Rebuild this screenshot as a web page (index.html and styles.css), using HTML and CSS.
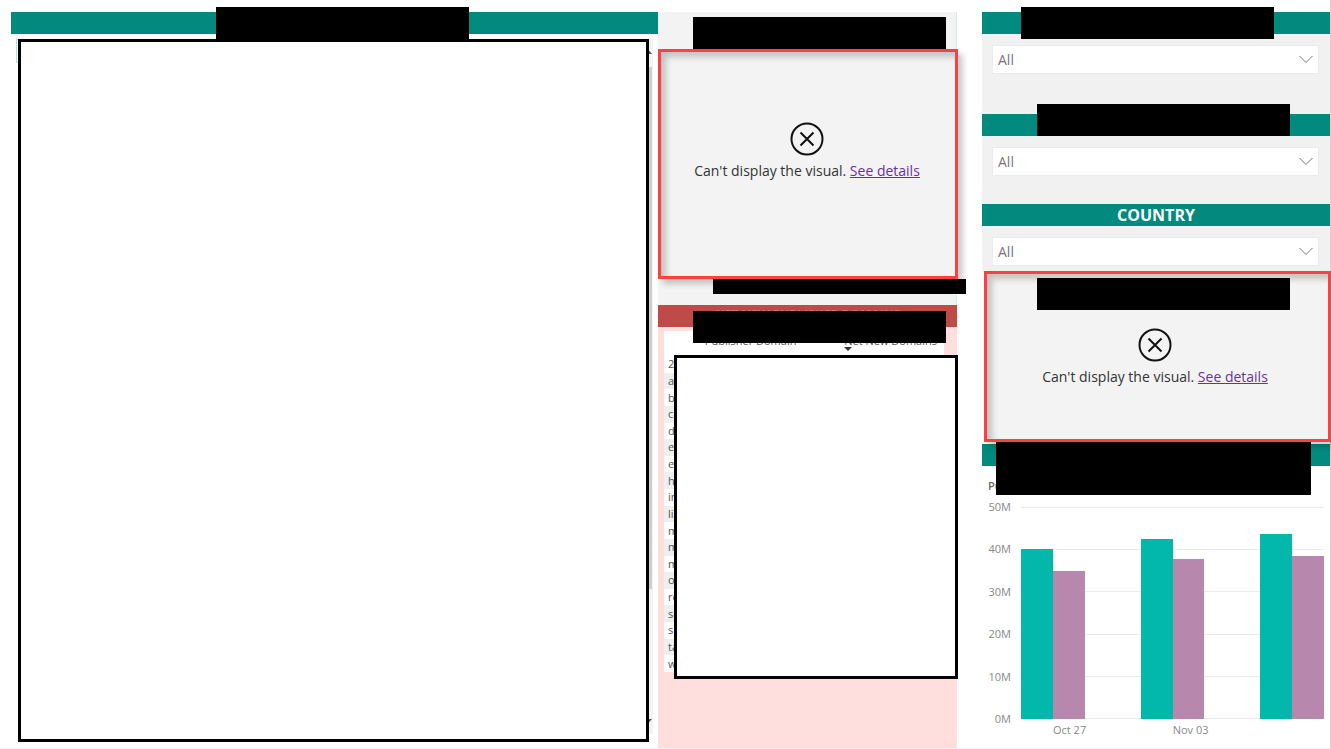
FILE: index.html
```html
<!DOCTYPE html>
<html lang="en">

<head>
    <meta charset="UTF-8">
    <meta name="viewport" content="width=device-width, initial-scale=1.0">
    <title>Publisher Report</title>
    <link rel="stylesheet" href="styles.css">
</head>

<body>
    <main class="report">
        <!-- Main table -->
        <section class="column">
            <div class="bar">
                <div class="redact redact-main"></div>
            </div>
            <div class="main-body">
                <div class="cell-focus"></div>
                <div class="scrollbar">
                    <svg width="7" height="4" viewBox="0 0 7 4"><path d="M0 4 3.500 0 7 4z" /></svg>
                    <div class="scroll-thumb"></div>
                    <svg width="7" height="4" viewBox="0 0 7 4"><path d="M0 0 3.500 4 7 0z" /></svg>
                </div>
                <div class="cover cover-main"></div>
            </div>
        </section>

        <!-- Domains -->
        <section class="column">
            <div class="card-area">
                <div class="redact redact-card"></div>
                <div class="callout">
                    <svg class="error-icon" viewBox="0 0 34 34">
                        <circle cx="17" cy="17" r="15.500" />
                        <path d="M10.500 10.500 23.500 23.500M23.500 10.500 10.500 23.500" />
                    </svg>
                    <p>Can't display the visual. <a href="#">See details</a></p>
                </div>
                <div class="redact redact-strip"></div>
            </div>
            <div class="bar bar-red">
                <h2>NET NEW PUBLISHER DOMAINS</h2>
                <div class="redact redact-domains"></div>
            </div>
            <div class="domains-body">
                <table class="domains">
                    <thead>
                        <tr>
                            <th>Publisher Domain</th>
                            <th class="sorted">Net New Domains</th>
                        </tr>
                    </thead>
                    <tbody>
                        <tr><td>2</td><td></td></tr>
                        <tr><td>a</td><td></td></tr>
                        <tr><td>b</td><td></td></tr>
                        <tr><td>c</td><td></td></tr>
                        <tr><td>d</td><td></td></tr>
                        <tr><td>e</td><td></td></tr>
                        <tr><td>e</td><td></td></tr>
                        <tr><td>h</td><td></td></tr>
                        <tr><td>in</td><td></td></tr>
                        <tr><td>li</td><td></td></tr>
                        <tr><td>m</td><td></td></tr>
                        <tr><td>m</td><td></td></tr>
                        <tr><td>m</td><td></td></tr>
                        <tr><td>o</td><td></td></tr>
                        <tr><td>re</td><td></td></tr>
                        <tr><td>se</td><td></td></tr>
                        <tr><td>s</td><td></td></tr>
                        <tr><td>ta</td><td></td></tr>
                        <tr><td>w</td><td></td></tr>
                    </tbody>
                </table>
                <div class="cover cover-domains"></div>
            </div>
        </section>

        <!-- Filters and chart -->
        <section class="column column-filters">
            <div class="bar">
                <div class="redact redact-first"></div>
            </div>
            <div class="slicer">
                <select aria-label="First filter">
                    <option>All</option>
                </select>
                <svg class="chevron" viewBox="0 0 14 9"><path d="M0.500 1 7 7.500 13.500 1" /></svg>
            </div>
            <div class="bar">
                <div class="redact redact-second"></div>
            </div>
            <div class="slicer slicer-short">
                <select aria-label="Second filter">
                    <option>All</option>
                </select>
                <svg class="chevron" viewBox="0 0 14 9"><path d="M0.500 1 7 7.500 13.500 1" /></svg>
            </div>
            <div class="bar">
                <h2><label for="country">COUNTRY</label></h2>
            </div>
            <div class="slicer slicer-last">
                <select id="country">
                    <option>All</option>
                </select>
                <svg class="chevron" viewBox="0 0 14 9"><path d="M0.500 1 7 7.500 13.500 1" /></svg>
            </div>
            <div class="callout callout-small">
                <div class="redact redact-callout"></div>
                <svg class="error-icon" viewBox="0 0 34 34">
                    <circle cx="17" cy="17" r="15.500" />
                    <path d="M10.500 10.500 23.500 23.500M23.500 10.500 10.500 23.500" />
                </svg>
                <p>Can't display the visual. <a href="#">See details</a></p>
            </div>
            <div class="bar">
                <div class="redact redact-chart"></div>
            </div>
            <div class="chart">
                <h3>Pu</h3>
                <div class="chart-grid">
                    <div class="y-axis">
                        <span>50M</span>
                        <span>40M</span>
                        <span>30M</span>
                        <span>20M</span>
                        <span>10M</span>
                        <span>0M</span>
                    </div>
                    <div class="lines">
                        <i></i><i></i><i></i><i></i><i></i><i></i>
                    </div>
                    <div class="bars">
                        <div class="group">
                            <div class="teal" style="height: 80%"></div>
                            <div class="mauve" style="height: 69.600%"></div>
                        </div>
                        <div class="group">
                            <div class="teal" style="height: 84.800%"></div>
                            <div class="mauve" style="height: 75.400%"></div>
                        </div>
                        <div class="group">
                            <div class="teal" style="height: 87.200%"></div>
                            <div class="mauve" style="height: 76.800%"></div>
                        </div>
                    </div>
                    <div class="x-axis">
                        <span>Oct 27</span>
                        <span>Nov 03</span>
                        <span></span>
                    </div>
                </div>
            </div>
        </section>
    </main>
</body>

</html>
```
FILE: styles.css
```css
* {
    box-sizing: border-box;
}

body {
    margin: 0;
    background: #fff;
    color: #333;
    font-family: "Open Sans", "Noto Sans", sans-serif;
}

h2,
h3,
p {
    margin: 0;
}

.report {
    display: grid;
    grid-template-columns: 647fr 299fr 25px 348fr;
    min-height: 100vh;
    padding: 12px 0 0 11px;
    border-right: 1px solid #d4d4d4;
    border-bottom: 1px solid #f0f0f0;
}

.column {
    display: flex;
    flex-direction: column;
    min-width: 0;
}

.column-filters {
    grid-column: 4;
}

.bar {
    position: relative;
    flex: none;
    height: 22px;
    background: #028a7e;
    color: #fff;
    text-align: center;
}

.bar h2 {
    font-size: 16px;
    line-height: 22px;
}

.bar-red {
    background: #bf4b48;
}

.bar-red h2 {
    color: #cf7a77;
    font-size: 12px;
    line-height: 20px;
}

/* Black boxes and framed covers */
.redact {
    position: absolute;
    z-index: 3;
    width: 253px;
    height: 32px;
    background: #000;
}

.redact-main {
    top: -5px;
    left: 205px;
}

.redact-card {
    top: 5px;
    left: 35px;
}

.redact-strip {
    top: 267px;
    left: 55px;
    height: 15px;
}

.redact-domains {
    top: 6px;
    left: 35px;
}

.redact-first {
    top: -5px;
    left: 39px;
}

.redact-second {
    top: -10px;
    left: 55px;
}

.redact-callout {
    top: 4px;
    left: 50px;
}

.redact-chart {
    top: -2px;
    left: 14px;
    width: auto;
    right: 19px;
    height: 53px;
}

.cover {
    position: absolute;
    z-index: 2;
    background: #fff;
    border: 3px solid #000;
}

.cover-main {
    inset: 5px 9px 6px 7px;
}

.cover-domains {
    top: 28px;
    left: 16px;
    right: -1px;
    height: 324px;
}

/* Main table */
.main-body {
    position: relative;
    flex: 1;
    display: flex;
    justify-content: space-between;
    padding: 5px 5px 14px;
}

.cell-focus {
    width: 40px;
    height: 24px;
    border: 1px solid #a6e8e0;
}

.scrollbar {
    display: flex;
    flex-direction: column;
    width: 9px;
    padding: 11px 1px;
    background: #f3f3f3;
    fill: #555;
}

.scroll-thumb {
    height: 522px;
    margin: 13px 0 auto;
    background: #cdcdcd;
}

/* Error cards */
.card-area {
    position: relative;
    height: 293px;
    padding-top: 37px;
    background: #f3f3f3;
    border-right: 1px solid #d5ebe8;
}

.callout {
    position: relative;
    z-index: 2;
    display: flex;
    flex-direction: column;
    align-items: center;
    height: 230px;
    margin-right: -2px;
    padding: 70px 2px 0 0;
    background: #f3f3f3;
    border: 3px solid #ff4040;
    box-shadow: 5px 5px 6px rgba(0, 0, 0, 0.2), inset 5px 5px 6px rgba(0, 0, 0, 0.2);
    font-size: 14px;
    line-height: 22px;
    white-space: nowrap;
}

.callout a {
    color: #6b2fa0;
}

.callout-small {
    height: 171px;
    margin: 0 -1px 2px 2px;
    padding: 54px 5px 0 0;
}

.error-icon {
    width: 34px;
    height: 34px;
    margin-bottom: 4px;
    fill: none;
    stroke: #111;
    stroke-width: 2;
}

/* Domains table */
.domains-body {
    position: relative;
    flex: 1;
    padding: 4px 13px 4px 6px;
    background: #ffdede;
}

.domains {
    width: 100%;
    height: 341px;
    background: #fff;
    border-collapse: collapse;
    color: #555;
    font-size: 11px;
    line-height: 14px;
}

.domains th {
    position: relative;
    height: 25px;
    padding: 0 7px 6px;
    font-weight: normal;
    white-space: nowrap;
}

.domains .sorted {
    text-align: right;
}

.sorted::after {
    content: "";
    position: absolute;
    top: 16px;
    left: 7px;
    border: 4px solid transparent;
    border-top-color: #333;
    border-bottom: 0;
}

.domains th:first-child {
    width: 62%;
}

.domains td {
    padding: 0 4px;
}

.domains tbody tr:nth-child(even) {
    background: #efefef;
}

/* Filters */
.slicer {
    position: relative;
    height: 80px;
    padding: 11px 11px 0 10px;
    background: #f1f1f1;
}

.slicer-short {
    height: 68px;
}

.slicer-last {
    height: 45px;
}

.slicer select {
    display: block;
    width: 100%;
    height: 29px;
    padding: 0 5px;
    appearance: none;
    background: #fff;
    border: 1px solid #ebebeb;
    border-radius: 0;
    color: #777;
    font-family: inherit;
    font-size: 14px;
}

.chevron {
    position: absolute;
    top: 21px;
    right: 17px;
    width: 14px;
    height: 9px;
    fill: none;
    stroke: #777;
    pointer-events: none;
}

/* Chart */
.chart {
    padding: 12px 6px 0;
    color: #888;
    font-size: 11px;
    line-height: 16px;
}

.chart h3 {
    margin-bottom: 5px;
    color: #666;
    font-size: 11px;
    font-weight: 600;
    line-height: 16px;
}

.chart-grid {
    display: grid;
    grid-template-columns: 23px 1fr;
    grid-template-rows: 228px 16px;
    column-gap: 10px;
}

.y-axis {
    display: flex;
    flex-direction: column;
    justify-content: space-between;
    text-align: right;
}

.lines,
.bars {
    grid-area: 1 / 2;
    display: flex;
    justify-content: space-between;
    margin: 8px 0;
}

.lines {
    flex-direction: column;
}

.lines i {
    height: 1px;
    background: #ebebeb;
}

.bars {
    z-index: 1;
}

.group {
    display: flex;
    align-items: flex-end;
    width: 21%;
}

.teal,
.mauve {
    flex: 1;
    background: #01b8aa;
}

.mauve {
    background: #b887ad;
}

.x-axis {
    grid-column: 2;
    display: flex;
    justify-content: space-between;
    margin-top: -5px;
}

.x-axis span {
    width: 21%;
    padding-left: 32px;
    white-space: nowrap;
}
```
